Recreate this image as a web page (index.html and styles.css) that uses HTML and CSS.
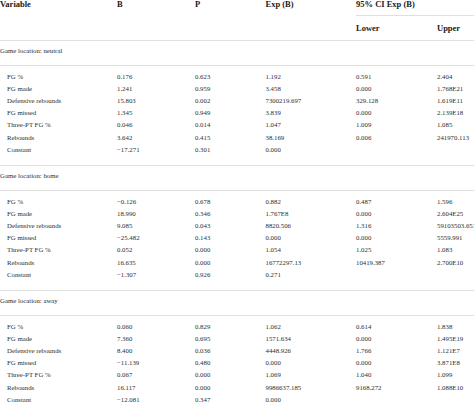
FILE: index.html
```html
<!DOCTYPE html>
<html>
<head>
<meta charset="utf-8">
<link rel="stylesheet" href="styles.css">
</head>
<body>
<table class="tbl">
  <colgroup>
    <col class="c1"><col class="c2"><col class="c3"><col class="c4"><col class="c5"><col class="c6">
  </colgroup>
  <thead>
    <tr class="h1">
      <th rowspan="2" class="span">Variable</th>
      <th rowspan="2" class="span">B</th>
      <th rowspan="2" class="span">P</th>
      <th rowspan="2" class="span">Exp (B)</th>
      <th colspan="2" class="ci">95% CI Exp (B)</th>
    </tr>
    <tr class="h2">
      <th class="sub">Lower</th>
      <th class="sub">Upper</th>
    </tr>
  </thead>
  <tbody>
    <tr class="grp"><td colspan="6">Game location: neutral</td></tr>
    <tr class="first"><td>FG %</td><td>0.176</td><td>0.623</td><td>1.192</td><td>0.591</td><td>2.404</td></tr>
    <tr><td>FG made</td><td>1.241</td><td>0.959</td><td>3.458</td><td>0.000</td><td>1.768E21</td></tr>
    <tr><td>Defensive rebounds</td><td>15.803</td><td>0.002</td><td>7300219.697</td><td>329.128</td><td>1.619E11</td></tr>
    <tr><td>FG missed</td><td>1.345</td><td>0.949</td><td>3.839</td><td>0.000</td><td>2.139E18</td></tr>
    <tr><td>Three-PT FG %</td><td>0.046</td><td>0.014</td><td>1.047</td><td>1.009</td><td>1.085</td></tr>
    <tr><td>Rebounds</td><td>3.642</td><td>0.415</td><td>38.169</td><td>0.006</td><td>241970.113</td></tr>
    <tr class="last"><td>Constant</td><td>−17.271</td><td>0.301</td><td>0.000</td><td></td><td></td></tr>

    <tr class="grp"><td colspan="6">Game location: home</td></tr>
    <tr class="first"><td>FG %</td><td>−0.126</td><td>0.678</td><td>0.882</td><td>0.487</td><td>1.596</td></tr>
    <tr><td>FG made</td><td>18.990</td><td>0.346</td><td>1.767E8</td><td>0.000</td><td>2.604E25</td></tr>
    <tr><td>Defensive rebounds</td><td>9.085</td><td>0.043</td><td>8820.506</td><td>1.316</td><td>59103503.653</td></tr>
    <tr><td>FG missed</td><td>−25.482</td><td>0.143</td><td>0.000</td><td>0.000</td><td>5559.991</td></tr>
    <tr><td>Three-PT FG %</td><td>0.052</td><td>0.000</td><td>1.054</td><td>1.025</td><td>1.083</td></tr>
    <tr><td>Rebounds</td><td>16.635</td><td>0.000</td><td>16772297.13</td><td>10419.387</td><td>2.700E10</td></tr>
    <tr class="last"><td>Constant</td><td>−1.307</td><td>0.926</td><td>0.271</td><td></td><td></td></tr>

    <tr class="grp"><td colspan="6">Game location: away</td></tr>
    <tr class="first"><td>FG %</td><td>0.060</td><td>0.829</td><td>1.062</td><td>0.614</td><td>1.838</td></tr>
    <tr><td>FG made</td><td>7.360</td><td>0.695</td><td>1571.634</td><td>0.000</td><td>1.495E19</td></tr>
    <tr><td>Defensive rebounds</td><td>8.400</td><td>0.036</td><td>4448.926</td><td>1.766</td><td>1.121E7</td></tr>
    <tr><td>FG missed</td><td>−11.139</td><td>0.480</td><td>0.000</td><td>0.000</td><td>3.871E8</td></tr>
    <tr><td>Three-PT FG %</td><td>0.067</td><td>0.000</td><td>1.069</td><td>1.040</td><td>1.099</td></tr>
    <tr><td>Rebounds</td><td>16.117</td><td>0.000</td><td>9986637.185</td><td>9168.272</td><td>1.088E10</td></tr>
    <tr class="last"><td>Constant</td><td>−12.081</td><td>0.347</td><td>0.000</td><td></td><td></td></tr>
  </tbody>
</table>
</body>
</html>
```

FILE: styles.css
```css
html, body {
  margin: 0;
  padding: 0;
  background: #ffffff;
  overflow: hidden;
}
.tbl {
  border-collapse: separate;
  border-spacing: 0;
  table-layout: fixed;
  width: 517px;
  margin-top: -1px;
  font-family: "Liberation Serif", "Times New Roman", serif;
  color: #2e2e2e;
}
.c1 { width: 117px; }
.c2 { width: 78px; }
.c3 { width: 70.5px; }
.c4 { width: 90.5px; }
.c5 { width: 81px; }
.c6 { width: 80px; }

.tbl th, .tbl td {
  padding: 0;
  text-align: left;
  white-space: nowrap;
}
.tbl th {
  font-weight: bold;
  font-size: 8.5px;
  line-height: 10px;
  color: #1a1a1a;
  vertical-align: top;
}
.tbl th.span {
  border-bottom: 1px solid #e0e0e0;
}
.tbl th.ci {
  padding-bottom: 6px;
  border-bottom: 1px solid #e0e0e0;
}
.tbl th.sub {
  padding-top: 6.5px;
  padding-bottom: 7.5px;
  border-bottom: 1px solid #e0e0e0;
}
.tbl td {
  font-size: 6.8px;
  line-height: 12.2px;
  vertical-align: top;
}
.tbl td:first-child {
  padding-left: 7px;
}
.tbl .grp td {
  line-height: 10px;
  padding-top: 5px;
  padding-bottom: 9px;
  padding-left: 0;
  border-bottom: 1px solid #e0e0e0;
}
.first td {
  padding-top: 4.6px;
}
.last td {
  padding-bottom: 9px;
  border-bottom: 1px solid #e0e0e0;
}
```
